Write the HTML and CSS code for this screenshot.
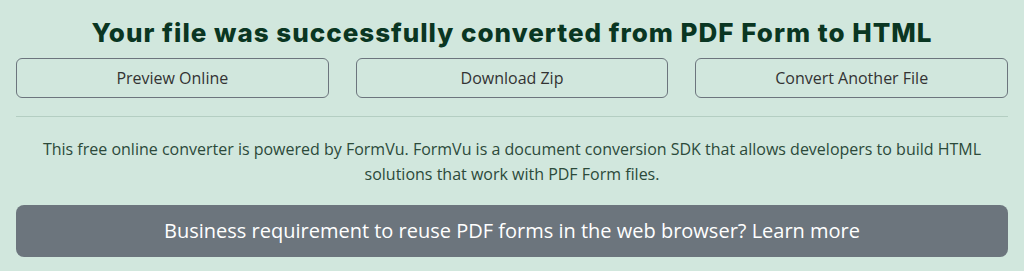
FILE: index.html
```html
<!DOCTYPE html>
<html lang="en-US">
  <head>
    <meta charset='utf-8'>
    <meta name='viewport' content='width=device-width, initial-scale=1'>
    <title>Conversion complete</title>
<link rel="stylesheet" href="styles.css">
</head>
<body>

<main class="result">
  <h1 class="title">Your file was successfully converted from PDF Form to HTML</h1>

  <div class="actions">
    <button class="action" type="button">Preview Online</button>
    <button class="action" type="button">Download Zip</button>
    <button class="action" type="button">Convert Another File</button>
  </div>

  <hr class="divider">

  <p class="about">This free online converter is powered by FormVu. FormVu is a document conversion SDK that allows developers to build HTML solutions that work with PDF Form files.</p>

  <a class="banner" href="#">Business requirement to reuse PDF forms in the web browser? Learn more</a>
</main>

</body></html>
```

FILE: styles.css
```css
body {
    margin: 0;
    background-color: #d1e7dd;
    font-family: "Open Sans", "Noto Sans", sans-serif;
}

.result {
    padding: 0 16px;
}

.title {
    margin: 0;
    padding-top: 17px;
    height: 41px;
    font-family: Inter, "Noto Sans", sans-serif;
    font-weight: 800;
    font-size: 26px;
    letter-spacing: 1px;
    line-height: 32px;
    color: #0a3622;
    text-align: center;
}

/* Buttons */
.actions {
    display: grid;
    grid-template-columns: 1fr 1fr 1fr;
    gap: 27px;
}

.action {
    height: 40px;
    background: transparent;
    border: 1px solid #6c757d;
    border-radius: 6px;
    font-family: inherit;
    font-size: 16px;
    color: #333333;
}

.divider {
    margin: 18px 0 0;
    border: none;
    border-top: 1px solid #b4cec2;
}

.about {
    margin: 20px 0 0;
    font-size: 16px;
    line-height: 25px;
    color: #2c4a3a;
    text-align: center;
}

/* Learn more banner */
.banner {
    display: block;
    margin-top: 18px;
    height: 52px;
    line-height: 52px;
    background-color: #6c757d;
    border-radius: 8px;
    color: #ffffff;
    font-size: 20px;
    text-align: center;
    text-decoration: none;
}
```
